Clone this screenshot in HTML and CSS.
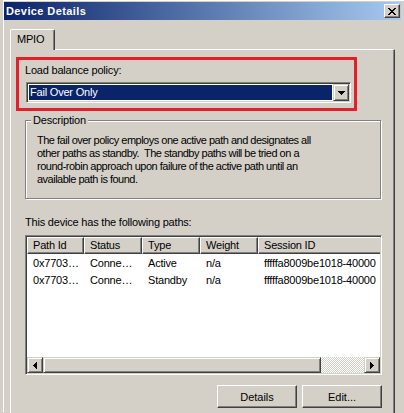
FILE: index.html
```html
<!DOCTYPE html>
<html lang="en">
<head>
    <meta charset="UTF-8">
    <title>Device Details</title>
    <link rel="stylesheet" href="styles.css">
</head>
<body>
    <div class="dialog">
        <div class="titlebar">
            <span class="title">Device Details</span>
            <span class="close">
                <svg width="8" height="7" viewBox="0 0 8 7" shape-rendering="crispEdges"><path d="M0 0h2v1h-2zM6 0h2v1h-2zM1 1h2v1h-2zM5 1h2v1h-2zM2 2h4v1h-4zM3 3h2v1h-2zM2 4h4v1h-4zM1 5h2v1h-2zM5 5h2v1h-2zM0 6h2v1h-2zM6 6h2v1h-2z"/></svg>
            </span>
        </div>

        <div class="tabs">
            <div class="tab">MPIO</div>
        </div>

        <div class="panel">
            <div class="highlight">
                <div class="label">Load balance policy:</div>
                <div class="combo">
                    <div class="combo-value">Fail Over Only</div>
                    <div class="combo-btn">
                        <svg width="7" height="4" viewBox="0 0 7 4" shape-rendering="crispEdges"><path d="M0 0h7v1h-1v1h-1v1h-1v1h-1v-1h-1v-1h-1v-1h-1z"/></svg>
                    </div>
                </div>
            </div>

            <div class="group">
                <span class="legend">Description</span>
                <p class="desc">The fail over policy employs one active path and designates all<br>other paths as standby.&nbsp; The standby paths will be tried on a<br>round-robin approach upon failure of the active path until an<br>available path is found.</p>
            </div>

            <div class="label paths-label">This device has the following paths:</div>

            <div class="listview">
                <div class="lv-head">
                    <div class="hcell w1">Path Id</div>
                    <div class="hcell w2">Status</div>
                    <div class="hcell w2">Type</div>
                    <div class="hcell w2">Weight</div>
                    <div class="hcell w5">Session ID</div>
                </div>
                <div class="lv-body">
                    <div class="row">
                        <div class="cell w1">0x7703…</div>
                        <div class="cell w2">Conne…</div>
                        <div class="cell w2">Active</div>
                        <div class="cell w2">n/a</div>
                        <div class="cell w5">fffffa8009be1018-40000</div>
                    </div>
                    <div class="row">
                        <div class="cell w1">0x7703…</div>
                        <div class="cell w2">Conne…</div>
                        <div class="cell w2">Standby</div>
                        <div class="cell w2">n/a</div>
                        <div class="cell w5">fffffa8009be1018-40000</div>
                    </div>
                </div>
                <div class="hscroll">
                    <div class="sb-btn">
                        <svg width="4" height="7" viewBox="0 0 4 7" shape-rendering="crispEdges"><path d="M4 0v7h-1v-1h-1v-1h-1v-1h-1v-1h1v-1h1v-1h1v-1z"/></svg>
                    </div>
                    <div class="sb-track">
                        <div class="sb-thumb"></div>
                    </div>
                    <div class="sb-btn">
                        <svg width="4" height="7" viewBox="0 0 4 7" shape-rendering="crispEdges"><path d="M0 0v7h1v-1h1v-1h1v-1h1v-1h-1v-1h-1v-1h-1v-1z"/></svg>
                    </div>
                </div>
            </div>

            <div class="actions">
                <button class="btn">Details</button>
                <button class="btn">Edit...</button>
            </div>
        </div>
    </div>
</body>
</html>
```

FILE: styles.css
```css
body {
    margin: 0;
    width: 404px;
    height: 413px;
    overflow: hidden;
    background: #d4d0c8;
    font-family: "Liberation Sans", Arial, sans-serif;
    font-size: 11px;
    letter-spacing: -0.2px;
    color: #000;
}
.dialog {
    margin-left: 3px;
    padding-top: 1px;
    border-top: 1px solid #fff;
    border-left: 1px solid #fff;
    height: 412px;
    box-sizing: border-box;
}
.titlebar {
    height: 18px;
    margin-right: 3px;
    padding: 0 1px 0 2px;
    display: flex;
    align-items: center;
    justify-content: space-between;
    background: linear-gradient(to right, #0a246a, #a6caf0);
    color: #fff;
    font-weight: bold;
    letter-spacing: 0.4px;
}
.close {
    width: 16px;
    height: 14px;
    box-sizing: border-box;
    display: flex;
    align-items: center;
    justify-content: center;
    background: #d4d0c8;
    border: 1px solid;
    border-color: #fff #404040 #404040 #fff;
    box-shadow: inset -1px -1px #808080;
}
.tabs {
    display: flex;
    margin: 9px 0 0 6px;
}
.tab {
    position: relative;
    width: 45px;
    height: 21px;
    box-sizing: border-box;
    margin-bottom: -1px;
    padding: 3px 0 0 6px;
    line-height: 13px;
    background: #d4d0c8;
    border: 1px solid #fff;
    border-bottom: 0;
    border-right-color: #404040;
    border-radius: 2px 2px 0 0;
    box-shadow: inset -1px 0 #808080;
}
.panel {
    margin-left: 6px;
    width: 385px;
    height: 364px;
    box-sizing: border-box;
    padding-left: 14px;
    border-top: 1px solid #fff;
    border-left: 1px solid #fff;
    border-right: 1px solid #404040;
    box-shadow: inset -1px 0 #808080;
}
.label {
    line-height: 13px;
    white-space: nowrap;
}
.highlight {
    margin: 7px 0 0 -9px;
    width: 341px;
    box-sizing: border-box;
    padding: 4px 0 5px 6px;
    border: 3px solid #e3202a;
}
.combo {
    display: flex;
    margin: 5px 0 0 1px;
    width: 325px;
    height: 21px;
    box-sizing: border-box;
    padding: 1px;
    background: #fff;
    border: 1px solid;
    border-color: #808080 #fff #fff #808080;
    box-shadow: inset 1px 1px #404040, inset -1px -1px #d4d0c8;
}
.combo-value {
    flex: 1;
    margin: 1px;
    padding-left: 1px;
    line-height: 15px;
    background: #0a246a;
    color: #fff;
}
.combo-btn {
    width: 16px;
    box-sizing: border-box;
    display: flex;
    align-items: center;
    justify-content: center;
    background: #d4d0c8;
    border: 1px solid;
    border-color: #d4d0c8 #404040 #404040 #d4d0c8;
    box-shadow: inset 1px 1px #fff, inset -1px -1px #808080;
}
.group {
    margin-top: 9px;
    width: 356px;
    height: 79px;
    box-sizing: border-box;
    border: 1px solid #808080;
    box-shadow: inset 1px 1px #fff, 1px 1px #fff;
}
.legend {
    display: block;
    width: fit-content;
    margin: -7px 0 0 5px;
    padding: 0 2px;
    line-height: 13px;
    background: #d4d0c8;
}
.desc {
    margin: 7px 0 0 11px;
    line-height: 13px;
    letter-spacing: -0.5px;
    white-space: nowrap;
}
.paths-label {
    margin-top: 17px;
}
.listview {
    display: flex;
    flex-direction: column;
    margin-top: 6px;
    width: 357px;
    height: 140px;
    box-sizing: border-box;
    padding: 1px;
    overflow: hidden;
    background: #fff;
    border: 1px solid;
    border-color: #808080 #fff #fff #808080;
    box-shadow: inset 1px 1px #404040, inset -1px -1px #d4d0c8;
}
.lv-head {
    display: flex;
    flex: none;
    height: 17px;
    overflow: hidden;
    background: #d4d0c8;
}
.hcell {
    flex: none;
    box-sizing: border-box;
    padding-left: 5px;
    line-height: 15px;
    white-space: nowrap;
    border: 1px solid;
    border-color: #fff #404040 #404040 #fff;
    box-shadow: inset -1px -1px #808080;
}
.w1 { width: 57px; }
.w2 { width: 58px; }
.w5 { width: 150px; }
.lv-body {
    flex: 1;
    padding-top: 1px;
    overflow: hidden;
}
.row {
    display: flex;
    height: 17px;
    line-height: 17px;
    white-space: nowrap;
}
.cell {
    flex: none;
    box-sizing: border-box;
    padding-left: 6px;
    overflow: hidden;
}
.hscroll {
    display: flex;
    flex: none;
    height: 16px;
}
.sb-btn,
.sb-thumb {
    box-sizing: border-box;
    background: #d4d0c8;
    border: 1px solid;
    border-color: #d4d0c8 #404040 #404040 #d4d0c8;
    box-shadow: inset 1px 1px #fff, inset -1px -1px #808080;
}
.sb-btn {
    width: 16px;
    display: flex;
    align-items: center;
    justify-content: center;
}
.sb-track {
    flex: 1;
    display: flex;
    background: repeating-conic-gradient(#d4d0c8 0 25%, #fff 0 50%) 0 0 / 2px 2px;
}
.sb-thumb {
    width: 278px;
}
.actions {
    display: flex;
    justify-content: flex-end;
    gap: 5px;
    width: 357px;
    margin-top: 10px;
}
.btn {
    width: 80px;
    height: 23px;
    padding: 0;
    font: inherit;
    color: #000;
    background: #d4d0c8;
    border: 1px solid;
    border-color: #fff #404040 #404040 #fff;
    box-shadow: inset -1px -1px #808080;
}
```
